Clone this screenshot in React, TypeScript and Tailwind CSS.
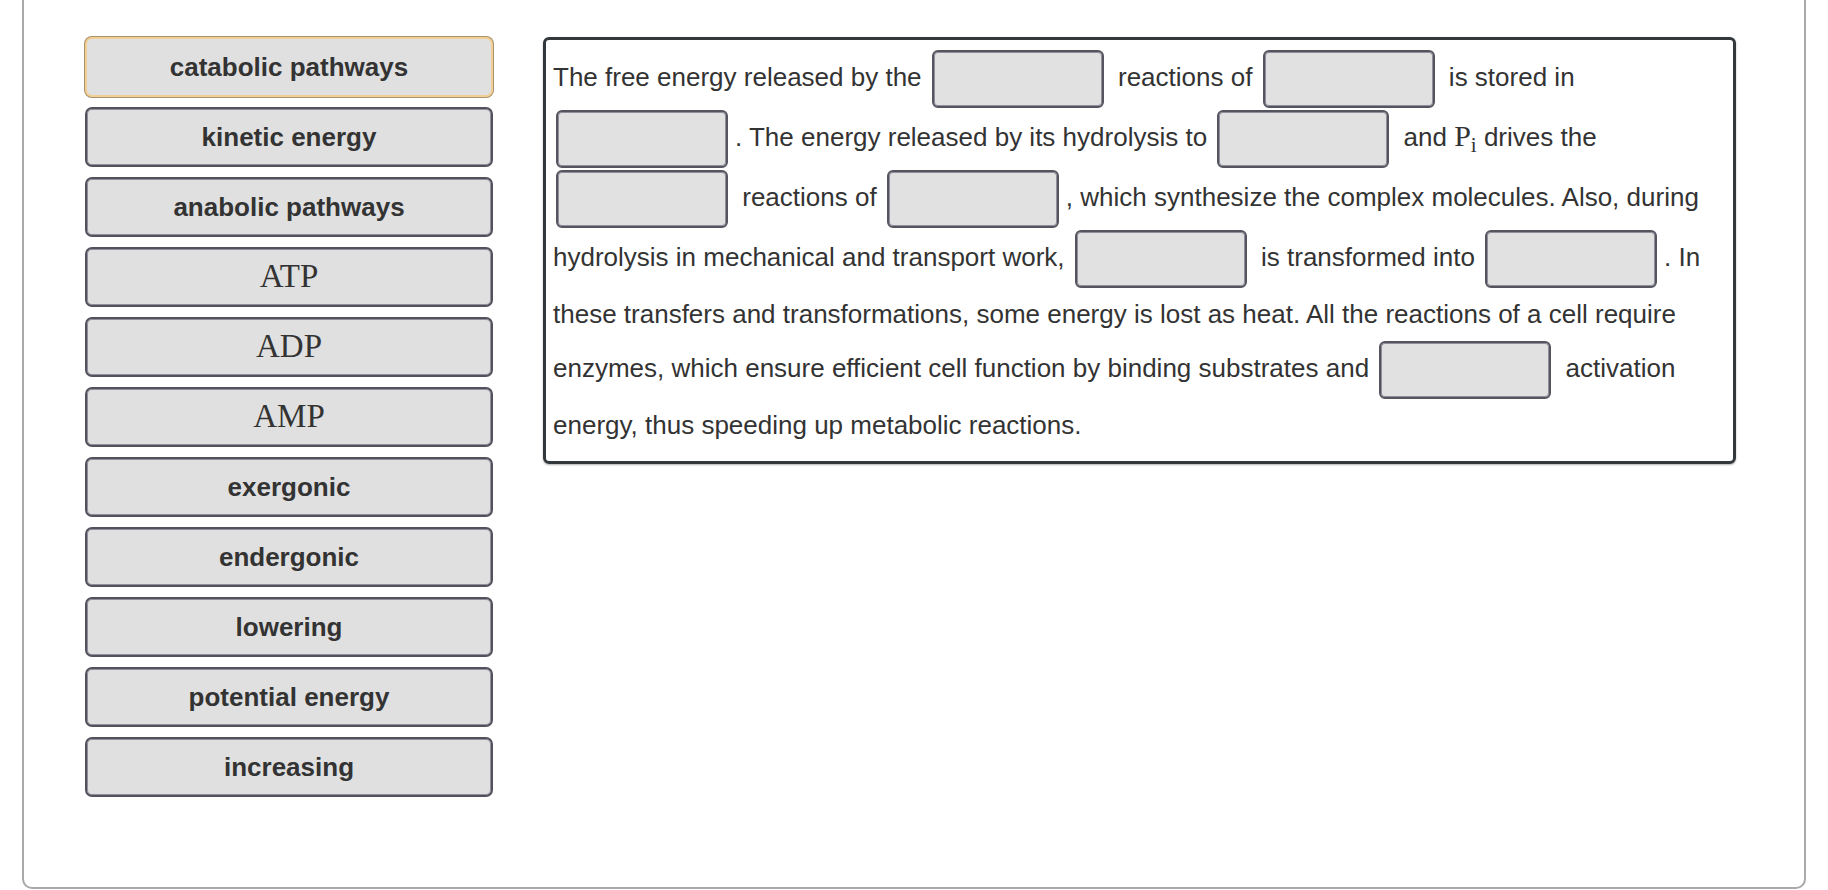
// drag-and-drop fill-in-the-blank exercise: word bank on the left, passage on the right
type Choice = { label: string; math?: boolean; active?: boolean };

const choices: Choice[] = [
  { label: 'catabolic pathways', active: true },
  { label: 'kinetic energy' },
  { label: 'anabolic pathways' },
  { label: 'ATP', math: true },
  { label: 'ADP', math: true },
  { label: 'AMP', math: true },
  { label: 'exergonic' },
  { label: 'endergonic' },
  { label: 'lowering' },
  { label: 'potential energy' },
  { label: 'increasing' },
];

function classNames(...classes: (string | false | undefined)[]) {
  return classes.filter(Boolean).join(' ');
}

function ChoiceTile({ item }: { item: Choice }) {
  return (
    <div
      className={classNames(
        'flex h-[60px] w-[408px] items-center justify-center rounded-[7px] border-2 bg-[#e0e0e0] text-[#333]',
        item.active
          ? 'border-[#f2cf95] shadow-[0_0_0_1px_#a8926c]'
          : 'border-[#52525c] shadow-[inset_0_0_0_1px_#8e8e9c]',
      )}
    >
      {item.math ? (
        <span className="font-['Liberation_Serif',serif] text-[33px]">{item.label}</span>
      ) : (
        <span className="text-[26px] font-bold">{item.label}</span>
      )}
    </div>
  );
}

function Blank() {
  return (
    <span className="my-px mr-[7px] ml-[3px] inline-block h-[58px] w-[172px] rounded-[6px] border-2 border-[#55555f] bg-[#e1e1e1] align-middle shadow-[inset_0_0_0_1px_#8e8e9c]" />
  );
}

function Pi() {
  return (
    <span className="font-['Liberation_Serif',serif]">
      <span className="text-[30px]">P</span>
      <span className="relative top-[6px] text-[21px]">i</span>
    </span>
  );
}

export default function App() {
  return (
    <div className="min-h-[890px] bg-white font-['Liberation_Sans',Arial,sans-serif] text-[#333]">
      <div className="ml-[22px] flex h-[889px] w-[1784px] items-start gap-[50px] rounded-b-[10px] border-2 border-t-0 border-[#a9a9a9] pt-[37px] pl-[61px]">
        <div className="flex flex-col gap-[10px]">
          {choices.map((item) => (
            <ChoiceTile key={item.label} item={item} />
          ))}
        </div>

        <div className="w-[1193px] rounded-[6px] border-[3px] border-[#33383c] px-[7px] pt-[9px] pb-[10px] text-[26px] leading-[51px] shadow-[0_1px_2px_rgba(0,0,0,0.3)]">
          The free energy released by the <Blank /> reactions of <Blank /> is stored in <Blank />. The energy released
          by its hydrolysis to <Blank /> and <Pi /> drives the <Blank /> reactions of <Blank />, which synthesize the
          complex molecules. Also, during hydrolysis in mechanical and transport work, <Blank /> is transformed into{' '}
          <Blank />. In these transfers and transformations, some energy is lost as heat. All the reactions of a cell
          require enzymes, which ensure efficient cell function by binding substrates and <Blank /> activation energy,
          thus speeding up metabolic reactions.
        </div>
      </div>
    </div>
  );
}
